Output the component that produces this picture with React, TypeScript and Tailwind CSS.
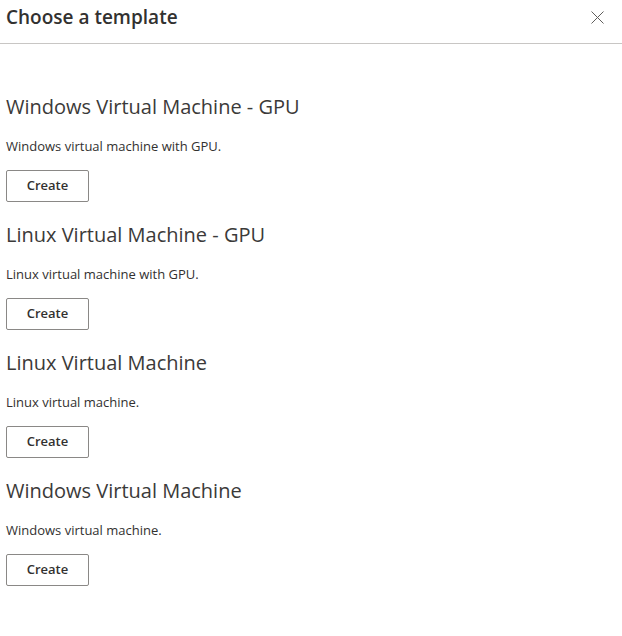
const TEMPLATES: { title: string; description: string }[] = [
  { title: 'Windows Virtual Machine - GPU', description: 'Windows virtual machine with GPU.' },
  { title: 'Linux Virtual Machine - GPU', description: 'Linux virtual machine with GPU.' },
  { title: 'Linux Virtual Machine', description: 'Linux virtual machine.' },
  { title: 'Windows Virtual Machine', description: 'Windows virtual machine.' },
];

export default function App() {
  return (
    <div
      className="w-[622px] h-[636px] bg-white text-[#323130]"
      style={{ fontFamily: '"Open Sans", "Noto Sans", sans-serif' }}
    >
      {/* Header */}
      <div className="h-[44px] border-b border-[#c8c6c4] flex items-start justify-between pl-[6px] pr-[18px]">
        <h1 className="text-[19px] leading-[32px] font-semibold mt-[1px]">Choose a template</h1>
        <button className="mt-[10px] w-[14px] h-[14px] flex items-center justify-center text-[#605e5c]" aria-label="Close">
          <svg width="13" height="13" viewBox="0 0 13 13" fill="none" stroke="currentColor" strokeWidth="1">
            <path d="M0.5 0.5L12.5 12.5M12.5 0.5L0.5 12.5" />
          </svg>
        </button>
      </div>

      {/* Templates */}
      <div className="pt-[46px] px-[6px] flex flex-col gap-[16px]">
        {TEMPLATES.map(t => (
          <div key={t.title} className="flex flex-col items-start">
            <h2 className="text-[20px] leading-[28px] font-normal text-[#3b3a39] mt-[3px] mb-[15px]">{t.title}</h2>
            <p className="text-[13px] leading-[20px] mb-[14px]">{t.description}</p>
            <button className="w-[83px] h-[32px] border border-[#8a8886] rounded-[2px] text-[13px] font-semibold text-[#323130] bg-white">
              Create
            </button>
          </div>
        ))}
      </div>
    </div>
  );
}
